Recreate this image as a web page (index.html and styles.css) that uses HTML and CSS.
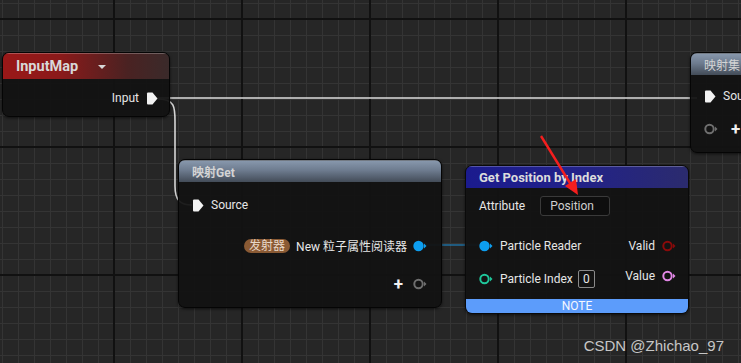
FILE: index.html
```html
<!DOCTYPE html>
<html lang="en">
<head>
    <meta charset="UTF-8">
    <title>Niagara Graph</title>
    <link rel="stylesheet" href="styles.css">
</head>
<body>
    <div class="graph">
        <!-- wires sit under the nodes -->
        <svg class="wires" width="741" height="363">
            <path d="M157 98 L697 98" stroke="#dcdcdc" stroke-width="1.6" fill="none"/>
            <path d="M157 99 C176 99 175 108 175 124 L175 186 C175 200 180 205 192 205" stroke="#d6d6d6" stroke-width="1.6" fill="none"/>
            <path d="M425 245 L482 245" stroke="#1a8fd8" stroke-width="1.2" fill="none"/>
        </svg>

        <div class="node node-input">
            <div class="head head-red">
                <span class="title">InputMap</span>
                <span class="caret"></span>
            </div>
            <div class="body">
                <div class="row row-right">
                    <span class="lbl">Input</span>
                    <svg class="pin" width="12" height="13" viewBox="0 0 12 13"><path d="M1 1.5 Q1 0.5 2 0.5 H6.5 L11.5 6.5 L6.5 12.5 H2 Q1 12.5 1 11.5 Z" fill="#f2f2f2"/></svg>
                </div>
            </div>
        </div>

        <div class="node node-set">
            <div class="head head-gray">
                <span class="title title-light">映射集</span>
            </div>
            <div class="body body-set">
                <div class="row">
                    <svg class="pin" width="12" height="13" viewBox="0 0 12 13"><path d="M1 1.5 Q1 0.5 2 0.5 H6.5 L11.5 6.5 L6.5 12.5 H2 Q1 12.5 1 11.5 Z" fill="#f2f2f2"/></svg>
                    <span class="lbl">Source</span>
                </div>
                <div class="row">
                    <svg class="pin" width="14" height="12" viewBox="0 0 14 12"><circle cx="5.5" cy="6" r="4.2" fill="none" stroke="#6e6e6e" stroke-width="2"/><path d="M11 3.5 L13.5 6 L11 8.5 Z" fill="#6e6e6e"/></svg>
                    <span class="plus">+</span>
                </div>
            </div>
        </div>

        <div class="node node-get">
            <div class="head head-gray">
                <span class="title title-light">映射Get</span>
            </div>
            <div class="body body-get">
                <div class="row">
                    <svg class="pin" width="12" height="13" viewBox="0 0 12 13"><path d="M1 1.5 Q1 0.5 2 0.5 H6.5 L11.5 6.5 L6.5 12.5 H2 Q1 12.5 1 11.5 Z" fill="#f2f2f2"/></svg>
                    <span class="lbl">Source</span>
                </div>
                <div class="row row-right">
                    <span class="badge">发射器</span>
                    <span class="lbl">New 粒子属性阅读器</span>
                    <svg class="pin" width="14" height="12" viewBox="0 0 14 12"><circle cx="5.5" cy="6" r="5.2" fill="#0d9ef0"/><path d="M11 3.5 L13.5 6 L11 8.5 Z" fill="#0d9ef0"/></svg>
                </div>
                <div class="row row-right">
                    <span class="plus">+</span>
                    <svg class="pin" width="14" height="12" viewBox="0 0 14 12"><circle cx="5.5" cy="6" r="4.2" fill="none" stroke="#6e6e6e" stroke-width="2"/><path d="M11 3.5 L13.5 6 L11 8.5 Z" fill="#6e6e6e"/></svg>
                </div>
            </div>
        </div>

        <div class="node node-pos">
            <div class="head head-blue">
                <span class="title">Get Position by Index</span>
            </div>
            <div class="body body-pos">
                <div class="row">
                    <span class="lbl">Attribute</span>
                    <span class="field">Position</span>
                </div>
                <div class="pos-grid">
                    <div class="row">
                        <svg class="pin" width="14" height="12" viewBox="0 0 14 12"><circle cx="5.5" cy="6" r="5.2" fill="#0d9ef0"/><path d="M11 3.5 L13.5 6 L11 8.5 Z" fill="#0d9ef0"/></svg>
                        <span class="lbl">Particle Reader</span>
                    </div>
                    <div class="row row-right">
                        <span class="lbl">Valid</span>
                        <svg class="pin" width="14" height="12" viewBox="0 0 14 12"><circle cx="5.5" cy="6" r="4.2" fill="none" stroke="#8a0a0a" stroke-width="2"/><path d="M11 3.5 L13.5 6 L11 8.5 Z" fill="#8a0a0a"/></svg>
                    </div>
                    <div class="row">
                        <svg class="pin" width="14" height="12" viewBox="0 0 14 12"><circle cx="5.5" cy="6" r="4.2" fill="none" stroke="#1fc59a" stroke-width="2"/><path d="M11 3.5 L13.5 6 L11 8.5 Z" fill="#1fc59a"/></svg>
                        <span class="lbl">Particle Index</span>
                        <span class="num">0</span>
                    </div>
                    <div class="row row-right row-up">
                        <span class="lbl">Value</span>
                        <svg class="pin" width="14" height="12" viewBox="0 0 14 12"><circle cx="5.5" cy="6" r="4.2" fill="none" stroke="#e287e6" stroke-width="2"/><path d="M11 3.5 L13.5 6 L11 8.5 Z" fill="#e287e6"/></svg>
                    </div>
                </div>
            </div>
            <div class="note">NOTE</div>
        </div>

        <!-- annotation arrow drawn on top -->
        <svg class="mark" width="741" height="363">
            <path d="M541 136 L573 188" stroke="#f41e1e" stroke-width="2.4" fill="none"/>
            <path d="M578 195 L565 186 L576 179 Z" fill="#f41e1e"/>
        </svg>

        <div class="watermark">CSDN @Zhichao_97</div>
    </div>
</body>
</html>
```

FILE: styles.css
```css
body{
    margin:0;
    padding:0;
    background:#262626;
    font-family: Roboto, "Noto Sans CJK SC", sans-serif;
}
.graph{
    position: relative;
    width:741px;
    height:363px;
    overflow: hidden;
    background-color:#262626;
    background-image:
        linear-gradient(90deg,#111 2px,transparent 2px),
        linear-gradient(#111 2px,transparent 2px),
        linear-gradient(90deg,#343434 1px,transparent 1px),
        linear-gradient(#343434 1px,transparent 1px);
    background-size:128px 128px,128px 128px,16px 16px,16px 16px;
    background-position:113px 0,0 18px,2px 0,0 3px;
}
.wires,.mark{
    position: absolute;
    left:0;
    top:0;
}
.mark{
    z-index: 5;
}
.node{
    position: absolute;
    display: flex;
    flex-direction: column;
    background: rgba(18,18,18,0.94);
    border:1px solid #050505;
    border-radius: 7px;
    box-shadow: 0 1px 3px rgba(0,0,0,0.6);
    overflow: hidden;
    color:#e6e6e6;
    font-size:12px;
}
.head{
    display: flex;
    align-items: center;
    padding-left:13px;
    border-top:1px solid rgba(255,255,255,0.25);
}
.head-red{
    height:25px;
    background: linear-gradient(90deg,#9a1818 0%,#8a1a1a 35%,#4a2222 75%,#3a2a2a 100%);
}
.head-gray{
    height:21px;
    background: linear-gradient(180deg,#8797ac 0%,#6d7b8e 45%,#434c58 100%);
}
.head-blue{
    height:21px;
    background: linear-gradient(90deg,#1b1b8e 0%,#222289 50%,#2b2b6e 100%);
}
.title{
    font-weight: bold;
    font-size:14.5px;
    color:#d8d8d8;
}
.title-light{
    font-weight: normal;
    color:#d4d4d4;
}
.head-gray .title-light{
    font-size:12px;
}
.node-get .title-light{
    font-weight: bold;
}
.head-blue .title{
    font-size:13px;
    color:#dcdcdc;
}
.caret{
    margin-left:20px;
    width:0;
    height:0;
    border-left:4px solid transparent;
    border-right:4px solid transparent;
    border-top:4px solid #d8d8d8;
}
.body{
    flex:1;
    display: flex;
    flex-direction: column;
}
.row{
    display: flex;
    align-items: center;
    gap:7px;
}
.row-right{
    justify-content: flex-end;
}
.pin{
    display: block;
}
.lbl{
    white-space: nowrap;
}
.plus{
    font-size:17px;
    font-weight: bold;
    color:#f0f0f0;
    line-height: 12px;
}

/* InputMap */
.node-input{
    left:2px;
    top:52px;
    width:166px;
    height:63px;
}
.node-input .body{
    padding:12px 11px 0 0;
}

/* 映射集 */
.node-set{
    left:690px;
    top:52px;
    width:120px;
    height:99px;
}
.node-set .head{
    padding-left:13px;
}
.body-set{
    padding:14px 0 0 13px;
    gap:20px;
}
.body-set .plus{
    margin-left:6px;
}

/* 映射Get */
.node-get{
    left:178px;
    top:159px;
    width:262px;
    height:147px;
}
.body-get{
    padding:16px 14px 0 13px;
    gap:25px;
}
.body-get .row-right{
    gap:6px;
}
.body-get .row-right:last-child{
    margin-top:-1px;
    gap:10px;
}
.badge{
    background:#8a5a34;
    color:#e8d8c8;
    border-radius: 7px;
    padding:0 5px;
    line-height: 14px;
    font-size:12px;
}

/* Get Position by Index */
.node-pos{
    left:465px;
    top:165px;
    width:222px;
    height:147px;
    border-color:#0a0a0a;
}
.body-pos{
    padding:8px 12px 0 13px;
}
.body-pos > .row{
    gap:15px;
}
.field{
    width:70px;
    height:20px;
    box-sizing: border-box;
    border:1px solid #3a3a3a;
    border-radius: 3px;
    background:#0e0e0e;
    color:#cfcfcf;
    padding-left:9px;
    line-height: 18px;
}
.pos-grid{
    display: grid;
    grid-template-columns: 1fr auto;
    row-gap:17px;
    margin-top:23px;
}
.row-up{
    margin-top:-6px;
}
.num{
    width:17px;
    height:18px;
    box-sizing: border-box;
    border:1px solid #8a8a8a;
    border-radius: 2px;
    text-align: center;
    line-height: 16px;
    margin-left:-2px;
}
.note{
    height:14px;
    background:#5c9cfb;
    color:#f4f8ff;
    text-align: center;
    font-size:12px;
    line-height: 14px;
}

.watermark{
    position: absolute;
    right:17px;
    bottom:9px;
    font-family: "Liberation Sans", Arial, sans-serif;
    font-size:15px;
    color:#c6c6c6;
    z-index: 6;
}
```
